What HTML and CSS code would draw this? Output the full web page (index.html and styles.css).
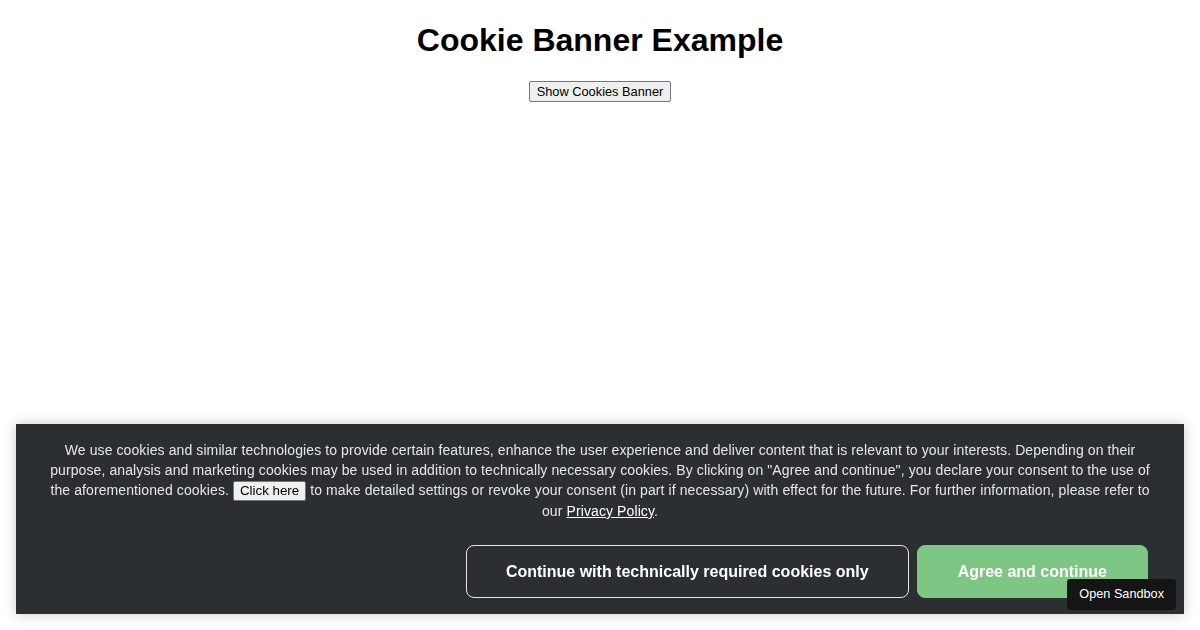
FILE: index.html
```html
<!DOCTYPE html>
<html lang="en">
<head>
<meta charset="utf-8">
<title>Cookie Banner Example</title>
<link rel="stylesheet" href="styles.css">
</head>
<body>
<main class="page">
  <h1 class="title">Cookie Banner Example</h1>
  <button class="show-btn" type="button">Show Cookies Banner</button>
</main>
<div class="banner">
  <p class="banner-text">We use cookies and similar technologies to provide certain features, enhance the user experience and deliver content that is relevant to your interests. Depending on their purpose, analysis and marketing cookies may be used in addition to technically necessary cookies. By clicking on "Agree and continue", you declare your consent to the use of the aforementioned cookies. <button class="inline-btn" type="button">Click here</button> to make detailed settings or revoke your consent (in part if necessary) with effect for the future. For further information, please refer to our <a class="policy" href="#">Privacy Policy</a>.</p>
  <div class="actions">
    <button class="btn btn-outline" type="button">Continue with technically required cookies only</button>
    <button class="btn btn-agree" type="button">Agree and continue</button>
  </div>
</div>
<a class="sandbox" href="#">Open Sandbox</a>
</body>
</html>
```
FILE: styles.css
```css
html, body {
  margin: 0;
  padding: 0;
  background: #ffffff;
  font-family: "Liberation Sans", Arial, sans-serif;
}

.page {
  text-align: center;
}

.title {
  font-size: 32px;
  font-weight: bold;
  margin: 22px 0;
  line-height: 37px;
  color: #000;
}

.show-btn {
  font-family: "Liberation Sans", Arial, sans-serif;
  font-size: 12.8px;
  color: #000;
  background: #efefef;
  border: 1px solid #767676;
  border-radius: 2px;
  padding: 1px 7px;
  height: 21px;
  line-height: 15px;
}

.banner {
  position: fixed;
  left: 16px;
  right: 16px;
  bottom: 16px;
  background: #2b2f32;
  box-shadow: 0 0 12px rgba(0, 0, 0, 0.22);
  padding: 16px 32px;
  box-sizing: border-box;
}

.banner-text {
  margin: 0;
  font-size: 14px;
  line-height: 20px;
  letter-spacing: 0.1px;
  color: #e6e6e6;
  text-align: center;
}

.inline-btn {
  font-family: "Liberation Sans", Arial, sans-serif;
  font-size: 13.33px;
  letter-spacing: 0;
  color: #000;
  background: #efefef;
  border: 1px solid #767676;
  border-radius: 2px;
  padding: 1px 6px;
  line-height: 16px;
  vertical-align: baseline;
}

.policy {
  color: #ffffff;
  text-decoration: underline;
}

.actions {
  display: flex;
  justify-content: flex-end;
  gap: 8px;
  margin-top: 24px;
  margin-right: 4px;
}

.btn {
  font-family: "Liberation Sans", Arial, sans-serif;
  font-size: 16px;
  font-weight: bold;
  line-height: 19px;
  padding: 16px 40px;
  border-radius: 8px;
  cursor: pointer;
}

.btn-outline {
  background: transparent;
  color: #ffffff;
  border: 1px solid #e6e6e6;
  padding: 16px 39px;
}

.btn-agree {
  background: #7ec683;
  color: #ffffff;
  border: 1px solid #7ec683;
}

.sandbox {
  position: fixed;
  right: 24px;
  bottom: 20px;
  background: #151515;
  color: #ffffff;
  font-size: 12.7px;
  line-height: 15px;
  padding: 8px 12px;
  border-radius: 3px;
  text-decoration: none;
}
```
